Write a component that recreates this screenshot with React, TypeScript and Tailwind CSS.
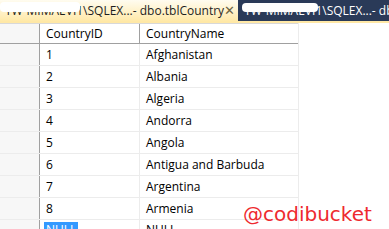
const rows = [
  { id: '1', name: 'Afghanistan' },
  { id: '2', name: 'Albania' },
  { id: '3', name: 'Algeria' },
  { id: '4', name: 'Andorra' },
  { id: '5', name: 'Angola' },
  { id: '6', name: 'Antigua and Barbuda' },
  { id: '7', name: 'Argentina' },
  { id: '8', name: 'Armenia' },
];

export default function App() {
  return (
    <div
      className="relative h-[229px] w-[389px] overflow-hidden bg-white text-[12px] text-black"
      style={{ fontFamily: '"Open Sans", "Noto Sans", sans-serif' }}
    >
      {/* Tabs */}
      <div className="flex h-[21px]">
        <div className="relative flex w-[243px] items-center bg-gradient-to-b from-[#fffcf0] to-[#ffe9a8] pl-[5px]">
          <span className="whitespace-nowrap text-[#1e1e1e]">TW-MIMAEVI1\SQLEX...- dbo.tblCountry</span>
          <span className="absolute left-0 top-[2px] h-[10px] w-[80px] rounded-sm bg-white" />
          <span className="ml-auto mr-[3px] text-[13px] leading-none text-[#6d6443]">✕</span>
        </div>
        <div className="relative flex flex-1 items-center bg-[#2a3a58] pl-[6px]">
          <span className="whitespace-nowrap text-white">TW-MIMAEVI1\SQLEX...- dbo.tblCountry</span>
          <span className="absolute left-[4px] top-[3px] h-[9px] w-[76px] rounded-sm bg-white" />
        </div>
      </div>
      <div className="h-[2px] bg-[#ffe8a6]" />

      {/* Grid */}
      <div className="w-[299px] border-r border-[#ececec]">
        <div className="flex h-[21px] border-y border-b-[#a0a0a0] border-t-[#d8d8d8]">
          <div className="w-[40px] border-r border-[#a0a0a0] bg-[#f7f7f7]" />
          <div className="flex w-[100px] items-center border-r border-[#a0a0a0] pl-[6px]">CountryID</div>
          <div className="flex flex-1 items-center pl-[6px]">CountryName</div>
        </div>
        {rows.map((r) => (
          <div key={r.id} className="flex h-[22px] border-b border-[#ececec] pt-[1px]">
            <div className="-mt-[1px] w-[40px] border-r border-[#a0a0a0] bg-[#f7f7f7]" />
            <div className="-mt-[1px] flex w-[100px] items-center border-r border-[#ececec] pl-[6px] pt-[1px]">{r.id}</div>
            <div className="flex flex-1 items-center pl-[6px]">{r.name}</div>
          </div>
        ))}
        <div className="flex h-[22px]">
          <div className="w-[40px] border-r border-[#a0a0a0] bg-[#f7f7f7]" />
          <div className="flex w-[100px] items-start border-r border-[#ececec] pl-[4px] pt-[2px]">
            <span className="bg-[#3399ff] px-[2px] leading-[16px] text-white">NULL</span>
          </div>
          <div className="flex flex-1 items-start pl-[6px] pt-[2px] leading-[16px]">NULL</div>
        </div>
      </div>

      <div
        className="absolute left-[243px] top-[204px] text-[20px] leading-none text-[#ee2a2f]"
        style={{ fontFamily: '"DejaVu Sans", sans-serif' }}
      >
        @codibucket
      </div>
    </div>
  );
}
